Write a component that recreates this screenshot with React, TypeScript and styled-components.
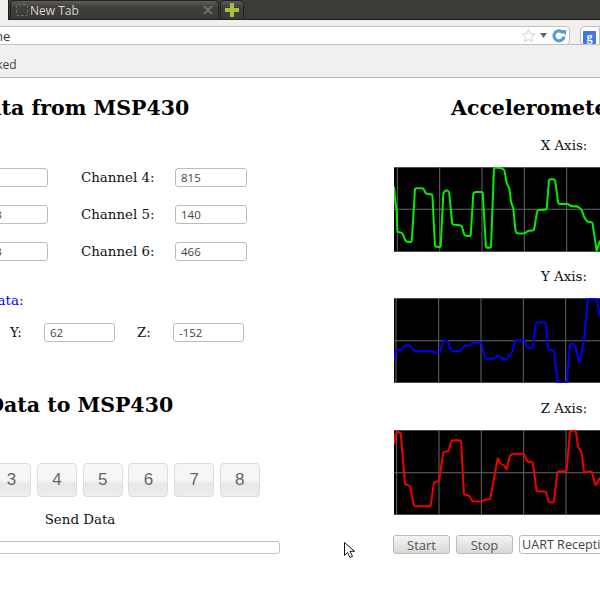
import React from "react";
import styled, { createGlobalStyle } from "styled-components";

const Global = createGlobalStyle`
  html, body { margin: 0; padding: 0; background: #fff; overflow: hidden; }
  #root { width: 600px; height: 600px; overflow: hidden; position: relative; }
`;

const Screen = styled.div`
  width: 600px;
  height: 600px;
  overflow: hidden;
  position: relative;
  font-family: "DejaVu Serif", serif;
  color: #111;
`;

const TabStrip = styled.div`
  height: 19px;
  background: #3c3b37;
  border-bottom: 1px solid #1f1e1b;
  display: flex;
  align-items: flex-end;
  margin-left: -2px;
`;

const ActiveTab = styled.div`
  width: 10px;
  height: 20px;
  margin-bottom: -1px;
  background: #f1f0ee;
  border-right: 1px solid #222;
  flex: none;
`;

const Tab = styled.div`
  width: 209px;
  height: 19px;
  margin-left: 1px;
  box-sizing: border-box;
  padding: 0 5px 0 5px;
  display: flex;
  align-items: center;
  gap: 2px;
  background: linear-gradient(#5c5b57, #403f3b 35%, #3a3935);
  border: 1px solid #24231f;
  border-bottom: 0;
  border-radius: 5px 5px 0 0;
  font: 12px "Open Sans", sans-serif;
  color: #d6d5d0;
  flex: none;
`;

const Favicon = styled.span`
  width: 10px;
  height: 10px;
  border: 1px dashed #6f6e69;
  border-radius: 2px;
  flex: none;
`;

const TabTitle = styled.span`
  flex: 1;
`;

const NewTabButton = styled.div`
  width: 24px;
  height: 19px;
  margin-left: 1px;
  display: flex;
  align-items: center;
  justify-content: center;
  background: linear-gradient(#5c5b57, #403f3b 35%, #3a3935);
  border: 1px solid #24231f;
  border-bottom: 0;
  border-radius: 5px 5px 0 0;
  box-sizing: border-box;
  flex: none;
`;

const Toolbar = styled.div`
  height: 25px;
  box-sizing: border-box;
  background: #f1f0ee;
  padding-top: 6px;
  display: flex;
  gap: 10px;
  border-bottom: 1px solid #bdbcb8;
`;

const AddressBar = styled.div`
  flex: none;
  width: 571px;
  height: 19px;
  margin-left: -1px;
  box-sizing: border-box;
  background: #fff;
  border: 1px solid #c2c1bd;
  border-radius: 0 4px 4px 0;
  display: flex;
  align-items: center;
  font: 13px "Open Sans", sans-serif;
  color: #333;
  padding-right: 3px;
`;

const AddressText = styled.span`
  flex: 1;
  margin-left: -84px;
`;

const SearchBox = styled.div`
  width: 40px;
  height: 19px;
  box-sizing: border-box;
  background: #fff;
  border: 1px solid #c2c1bd;
  border-radius: 4px 0 0 4px;
  padding: 2px;
`;

const BookmarkBar = styled.div`
  height: 33px;
  box-sizing: border-box;
  background: #f1f0ee;
  border-bottom: 1px solid #b9b8b4;
  display: flex;
  align-items: center;
  font: 12px "Open Sans", sans-serif;
  color: #444;
  padding-top: 6px;
`;

const BookmarkText = styled.span`
  margin-left: -55px;
`;

const Main = styled.main`
  display: grid;
  grid-template-columns: 400px 114px 340px;
  margin-left: -120px;
  width: 854px;
`;

const LeftColumn = styled.section`
  grid-column: 1;
  display: flex;
  flex-direction: column;
`;

const RightColumn = styled.section`
  grid-column: 3;
  display: flex;
  flex-direction: column;
`;

const Heading = styled.h1<{ $top: number; $left: number }>`
  font: bold 20.5px/26px "DejaVu Serif", serif;
  margin: ${(p) => p.$top}px 0 0 ${(p) => p.$left}px;
  white-space: nowrap;
  color: #000;
`;

const ChannelGrid = styled.div`
  display: grid;
  grid-template-columns: 94px 72px 127px 72px;
  row-gap: 18px;
  margin: 47px 0 0 2px;
`;

const Label = styled.label`
  font-size: 13.4px;
  line-height: 19px;
  white-space: nowrap;
`;

const SpacedLabel = styled(Label)`
  margin-left: 33px;
`;

const Field = styled.input`
  width: 72px;
  height: 19px;
  box-sizing: border-box;
  border: 1px solid #bfbdb9;
  border-radius: 3px;
  padding: 0 5px;
  margin: 0;
  font: 11.5px "Open Sans", sans-serif;
  color: #444;
  background: #fff;
`;

const SectionNote = styled.div`
  color: #0000ee;
  font-size: 13.4px;
  line-height: 19px;
  margin: 30px 0 0 3px;
  white-space: nowrap;
`;

const AccelRow = styled.div`
  display: flex;
  align-items: center;
  margin: 13px 0 0 3px;
`;

const AccelLabel = styled(Label)<{ $w: number }>`
  width: ${(p) => p.$w}px;
  flex: none;
`;

const AccelField = styled(Field)`
  flex: none;
  width: 71px;
  margin-right: 22px;
`;

const BitRow = styled.div`
  display: flex;
  gap: 5.7px;
  margin: 45px 0 0 20px;
`;

const BitButton = styled.button`
  width: 40px;
  height: 34px;
  box-sizing: border-box;
  border: 1px solid #dcdcdc;
  border-radius: 4px;
  background: linear-gradient(#f6f6f6 0 50%, #e8e8e8 62%, #ededed);
  font: 17px "Liberation Sans", sans-serif;
  color: #666;
  padding: 0;
  flex: none;
`;

const SendLabel = styled.div`
  font-size: 13.4px;
  line-height: 19px;
  text-align: center;
  margin: 13px 0 0;
`;

const SendInput = styled.input`
  display: block;
  width: 399px;
  height: 13px;
  box-sizing: border-box;
  margin: 12px 0 0 1px;
  border: 1px solid #c4c3bf;
  border-radius: 3px;
  background: #fff;
  padding: 0;
`;

const AxisTitle = styled.div<{ $top: number }>`
  font-size: 13.4px;
  line-height: 19px;
  text-align: center;
  margin-top: ${(p) => p.$top}px;
`;

const ChartFrame = styled.svg`
  display: block;
  width: 206px;
  height: 85px;
  background: #000;
  overflow: hidden;
`;

const ChartWrap = styled.div<{ $top: number }>`
  width: 340px;
  height: 85px;
  margin-top: ${(p) => p.$top}px;
  background: #000;
`;

const Controls = styled.div`
  display: flex;
  gap: 6px;
  margin: 20px 0 0 -1px;
`;

const ActionButton = styled.button`
  width: 57px;
  height: 19px;
  box-sizing: border-box;
  border: 1px solid #bcbbb7;
  border-radius: 3px;
  background: linear-gradient(#f4f4f3, #d9d8d6);
  font: 13px "Open Sans", sans-serif;
  color: #555;
  padding: 0;
  flex: none;
`;

const ModeSelect = styled.div`
  width: 180px;
  height: 19px;
  box-sizing: border-box;
  border: 1px solid #bcbbb7;
  border-radius: 3px;
  background: #fff;
  font: 12.6px/17px "Open Sans", sans-serif;
  color: #444;
  padding-left: 2px;
  white-space: nowrap;
  flex: none;
`;

const Pointer = styled.svg`
  position: absolute;
  left: 343px;
  top: 541px;
  width: 13px;
  height: 18px;
`;

const StarIcon = styled.svg`
  width: 15px;
  height: 15px;
  margin-right: 4px;
  flex: none;
`;

const ArrowIcon = styled.svg`
  width: 7px;
  height: 5px;
  margin-right: 5px;
  flex: none;
`;

const ReloadIcon = styled.svg`
  width: 14px;
  height: 14px;
  flex: none;
`;

type Pt = [number, number];

const green: Pt[] = [[27,170],[31,215],[35,240],[37,305],[52,307],[62,333],[80,335],[85,260],[90,175],[115,175],[123,192],[142,193],[150,348],[167,350],[175,190],[182,181],[192,183],[202,283],[230,285],[238,315],[257,317],[265,190],[270,186],[293,186],[303,351],[318,351],[327,114],[345,114],[358,120],[365,160],[373,175],[378,215],[385,235],[392,305],[397,309],[420,309],[428,301],[447,300],[457,240],[485,238],[492,148],[510,148],[520,222],[550,222],[557,228],[578,229],[590,238],[597,260],[608,275],[622,275],[635,362],[645,330]];
const blue: Pt[] = [[27,285],[33,255],[50,253],[60,240],[75,240],[87,257],[140,257],[150,262],[165,260],[175,226],[188,225],[198,257],[228,257],[235,242],[255,241],[262,232],[290,232],[300,280],[328,280],[340,270],[350,278],[365,283],[373,268],[382,260],[390,225],[418,225],[427,248],[443,248],[453,172],[482,172],[490,254],[507,255],[518,351],[545,351],[555,236],[568,236],[583,290],[590,260],[597,225],[608,102],[635,102],[645,155]];
const red: Pt[] = [[27,145],[33,110],[47,110],[60,265],[75,270],[87,331],[137,331],[147,258],[162,256],[175,168],[190,167],[200,134],[228,134],[237,297],[252,298],[263,317],[290,317],[300,311],[315,311],[325,260],[338,186],[347,205],[357,208],[365,222],[375,178],[385,174],[417,174],[427,198],[443,198],[455,287],[483,287],[492,320],[507,320],[517,226],[545,226],[555,105],[572,105],[580,155],[590,170],[597,230],[620,226],[632,270],[645,245]];

function toward(a: Pt, b: Pt, r: number): Pt {
  const dx = b[0] - a[0];
  const dy = b[1] - a[1];
  const len = Math.hypot(dx, dy) || 1;
  const k = Math.min(r, len / 2) / len;
  return [a[0] + dx * k, a[1] + dy * k];
}

function smooth(data: Pt[]): string {
  let d = `M${data[0].join(" ")}`;
  for (let i = 1; i < data.length - 1; i++) {
    const p = data[i];
    const a = toward(p, data[i - 1], 5);
    const b = toward(p, data[i + 1], 5);
    d += `L${a.join(" ")}Q${p.join(" ")} ${b.join(" ")}`;
  }
  return `${d}L${data[data.length - 1].join(" ")}`;
}

function Scope({ data, color, grid, h, top, bottom }: { data: Pt[]; color: string; grid: number[]; h: number; top: number; bottom: number }) {
  return (
    <ChartFrame viewBox={`27 ${top} 618 ${bottom - top}`} preserveAspectRatio="none">
      <g stroke="#666" strokeWidth="3">
        {grid.map((x) => (
          <line key={x} x1={x} x2={x} y1={top} y2={bottom} />
        ))}
        <line x1="27" x2="645" y1={h} y2={h} />
        <line x1="27" x2="645" y1={top + 1} y2={top + 1} />
        <line x1="27" x2="645" y1={bottom - 1} y2={bottom - 1} />
      </g>
      <path d={smooth(data)} fill="none" stroke={color} strokeWidth="6" strokeLinejoin="round" />
    </ChartFrame>
  );
}

const channels = [
  ["Channel 1:", "96", "Channel 4:", "815"],
  ["Channel 2:", "713", "Channel 5:", "140"],
  ["Channel 3:", "493", "Channel 6:", "466"],
];

export default function App() {
  return (
    <Screen>
      <Global />
      <TabStrip>
        <ActiveTab />
        <Tab>
          <Favicon />
          <TabTitle>New Tab</TabTitle>
          <svg width="10" height="10" viewBox="0 0 10 10">
            <path d="M1 1l8 8M9 1l-8 8" stroke="#6f6e69" strokeWidth="2" />
          </svg>
        </Tab>
        <NewTabButton>
          <svg width="14" height="14" viewBox="0 0 14 14">
            <path d="M5 0h4v5h5v4H9v5H5V9H0V5h5z" fill="#a4c23c" />
          </svg>
        </NewTabButton>
      </TabStrip>
      <Toolbar>
        <AddressBar>
          <AddressText>localhost/home</AddressText>
          <StarIcon viewBox="0 0 24 24">
            <path d="M12 2.500l3 6.600 7 .8-5.200 4.800 1.500 7-6.300-3.600-6.300 3.600 1.500-7L2 9.900l7-.8z" fill="#fff" stroke="#cfcfcf" strokeWidth="1.600" />
          </StarIcon>
          <ArrowIcon viewBox="0 0 7 5">
            <path d="M0 0h7L3.500 5z" fill="#666" />
          </ArrowIcon>
          <ReloadIcon viewBox="0 0 14 14">
            <path d="M11.300 4.200A5 5 0 1 0 12 7.500" fill="none" stroke="#5b9bd5" strokeWidth="3.200" />
            <path d="M8 1h6v5.500z" fill="#5b9bd5" />
          </ReloadIcon>
        </AddressBar>
        <SearchBox>
          <svg width="13" height="13" viewBox="0 0 13 13">
            <rect width="13" height="13" rx="1" fill="#3f78e6" />
            <text x="6.500" y="10" textAnchor="middle" fontFamily="Liberation Serif, serif" fontSize="12" fontWeight="bold" fill="#fff">g</text>
          </svg>
        </SearchBox>
      </Toolbar>
      <BookmarkBar>
        <BookmarkText>Bookmarked</BookmarkText>
      </BookmarkBar>
      <Main>
        <LeftColumn>
          <Heading $top={17} $left={-5}>Receive Data from MSP430</Heading>
          <ChannelGrid>
            {channels.map((r) => (
              <React.Fragment key={r[0]}>
                <Label>{r[0]}</Label>
                <Field readOnly value={r[1]} />
                <SpacedLabel>{r[2]}</SpacedLabel>
                <Field readOnly value={r[3]} />
              </React.Fragment>
            ))}
          </ChannelGrid>
          <SectionNote>Accelerometer Data:</SectionNote>
          <AccelRow>
            <AccelLabel $w={34}>X:</AccelLabel>
            <AccelField readOnly value="-41" />
            <AccelLabel $w={34}>Y:</AccelLabel>
            <AccelField readOnly value="62" />
            <AccelLabel $w={36}>Z:</AccelLabel>
            <AccelField readOnly value="-152" />
          </AccelRow>
          <Heading $top={50} $left={42}>Send Data to MSP430</Heading>
          <BitRow>
            {[1, 2, 3, 4, 5, 6, 7, 8].map((n) => (
              <BitButton key={n}>{n}</BitButton>
            ))}
          </BitRow>
          <SendLabel>Send Data</SendLabel>
          <SendInput readOnly />
        </LeftColumn>
        <RightColumn>
          <Heading $top={17} $left={57}>Accelerometer Data</Heading>
          <AxisTitle $top={15}>X Axis:</AxisTitle>
          <ChartWrap $top={12}>
            <Scope data={green} color="#00f000" grid={[37, 164, 291, 418, 545]} h={237} top={112} bottom={364} />
          </ChartWrap>
          <AxisTitle $top={15}>Y Axis:</AxisTitle>
          <ChartWrap $top={12}>
            <Scope data={blue} color="#0000f0" grid={[33, 161, 288, 415, 542]} h={226} top={99} bottom={352} />
          </ChartWrap>
          <AxisTitle $top={16}>Z Axis:</AxisTitle>
          <ChartWrap $top={12}>
            <Scope data={red} color="#f00000" grid={[35, 162, 289, 416, 543]} h={231} top={103} bottom={357} />
          </ChartWrap>
          <Controls>
            <ActionButton>Start</ActionButton>
            <ActionButton>Stop</ActionButton>
            <ModeSelect>UART Reception</ModeSelect>
          </Controls>
        </RightColumn>
      </Main>
      <Pointer viewBox="0 0 13 18">
        <path d="M1.500 1.500v13l3-3 2.500 5 2.500-1.200-2.500-5h4.500z" fill="#fff" stroke="#111" strokeWidth="1" />
      </Pointer>
    </Screen>
  );
}
